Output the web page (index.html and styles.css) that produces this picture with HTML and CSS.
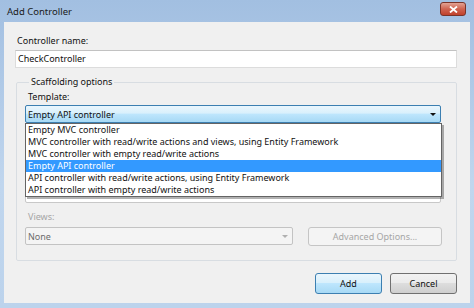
FILE: index.html
```html
<!DOCTYPE html>
<html lang="en">
<head>
  <meta charset="UTF-8" />
  <title>Add Controller</title>
  <link rel="stylesheet" href="styles.css">
</head>
<body>
  <div class="window">
    <div class="titlebar">
      <span class="title">Add Controller</span>
      <span class="close-btn">
        <svg width="9" height="7" viewBox="0 0 9 7"><path d="M1 0.5 L8 6.5 M8 0.5 L1 6.5" stroke="#fff" stroke-width="1.8"/></svg>
      </span>
    </div>

    <div class="content">
      <div class="label">Controller name:</div>
      <div class="textbox">CheckController</div>

      <fieldset class="group">
        <legend>Scaffolding options</legend>

        <div class="label">Template:</div>
        <div class="combo-wrap">
          <div class="combo open">
            <span>Empty API controller</span>
            <span class="arrow"></span>
          </div>
          <!-- open dropdown list -->
          <ul class="dropdown">
            <li>Empty MVC controller</li>
            <li>MVC controller with read/write actions and views, using Entity Framework</li>
            <li>MVC controller with empty read/write actions</li>
            <li class="selected">Empty API controller</li>
            <li>API controller with read/write actions, using Entity Framework</li>
            <li>API controller with empty read/write actions</li>
          </ul>
        </div>

        <div class="combo hidden-combo"></div>

        <div class="label disabled views-label">Views:</div>
        <div class="views-row">
          <div class="combo disabled-combo">
            <span>None</span>
            <span class="arrow grey"></span>
          </div>
          <button class="btn disabled-btn">Advanced Options...</button>
        </div>
      </fieldset>

      <div class="actions">
        <button class="btn default">Add</button>
        <button class="btn">Cancel</button>
      </div>
    </div>
  </div>
</body>
</html>
```

FILE: styles.css
```css
body {
  margin: 0;
  font-family: 'Noto Sans', 'Open Sans', sans-serif;
  font-size: 9px;
  color: #111;
}

.window {
  width: 474px;
  height: 308px;
  box-sizing: border-box;
  padding: 0 4px 5px 4px;
  background: linear-gradient(to bottom, #a2bfe1, #c0d6ee 60%, #bcd3ec);
  display: flex;
  flex-direction: column;
}

.titlebar {
  height: 22px;
  display: flex;
  align-items: center;
  justify-content: space-between;
  padding: 0 4px 0 3px;
}

.title {
  font-size: 9.5px;
  color: #1a1a1a;
}

.close-btn {
  width: 24px;
  height: 12px;
  margin-top: -4px;
  border: 1px solid #7a3328;
  border-radius: 3px;
  background: linear-gradient(to bottom, #e2a293, #cf6350 50%, #c0412b);
  display: flex;
  align-items: center;
  justify-content: center;
}

.content {
  flex: 1;
  background: #f0f0f0;
  padding: 13px 13px 0 11px;
  display: flex;
  flex-direction: column;
}

.label {
  line-height: 12px;
  margin-left: 2px;
}

.label.disabled {
  color: #a6a6a6;
}

.textbox {
  margin-top: 3px;
  height: 18px;
  box-sizing: border-box;
  background: #fff;
  border: 1px solid #dcdcdc;
  border-top-color: #c2c2c2;
  padding: 0 2px;
  line-height: 16px;
}

.group {
  margin: 8px 0 0 1px;
  padding: 3px 14px 14px 8px;
  border: 1px solid #d8dde2;
  border-radius: 2px;
  min-width: 0;
}

.group legend {
  margin-left: 4px;
  padding: 0 2px;
  line-height: 12px;
}

.group .label {
  margin-left: 3px;
}

.combo-wrap {
  position: relative;
  margin-top: 2px;
  width: 416px;
}

.combo {
  height: 18px;
  box-sizing: border-box;
  display: flex;
  align-items: center;
  justify-content: space-between;
  padding: 0 4px 0 2px;
  border: 1px solid #b5b5b5;
  border-radius: 2px;
  background: #fff;
}

.combo.open {
  border-color: #3c7fb1;
  background: linear-gradient(to bottom, #eaf6fd, #d9f0fc 45%, #bee6fd 50%, #a7d9f5);
}

.arrow {
  width: 0;
  height: 0;
  border-left: 3px solid transparent;
  border-right: 3px solid transparent;
  border-top: 3px solid #111;
}

.arrow.grey {
  border-top-color: #b0b0b0;
}

.dropdown {
  position: absolute;
  top: 18px;
  left: 0;
  width: 417px;
  box-sizing: border-box;
  margin: 0;
  padding: 0;
  list-style: none;
  background: #fff;
  border: 1px solid #646464;
  box-shadow: 2px 2px 0 rgba(0, 0, 0, 0.3);
  z-index: 2;
}

.dropdown li {
  line-height: 12px;
  padding-left: 2px;
  white-space: nowrap;
}

.dropdown li.selected {
  background: #3399ff;
  color: #fff;
}

.hidden-combo {
  margin-top: 62px;
  width: 416px;
  border-color: #c8c8c8;
}

.group .views-label {
  margin-top: 8px;
}

.views-row {
  margin-top: 4px;
  display: flex;
  justify-content: space-between;
  align-items: flex-start;
}

.disabled-combo {
  width: 268px;
  background: #f4f4f4;
  border-color: #c3c3c3;
  color: #6d6d6d;
}

.btn {
  font-family: inherit;
  font-size: 9px;
  height: 21px;
  width: 67px;
  padding: 0;
  color: #111;
  border: 1px solid #707070;
  border-radius: 3px;
  background: linear-gradient(to bottom, #f2f2f2, #ebebeb 45%, #dddddd 50%, #cfcfcf);
}

.btn.disabled-btn {
  width: 134px;
  height: 19px;
  color: #a6a6a6;
  border-color: #c5c5c5;
  background: #f4f4f4;
}

.btn.default {
  border-color: #3c7fb1;
  background: linear-gradient(to bottom, #eaf6fd, #d9f0fc 45%, #bee6fd 50%, #a7d9f5);
}

.actions {
  margin-top: 12px;
  display: flex;
  justify-content: flex-end;
  gap: 8px;
}
```
